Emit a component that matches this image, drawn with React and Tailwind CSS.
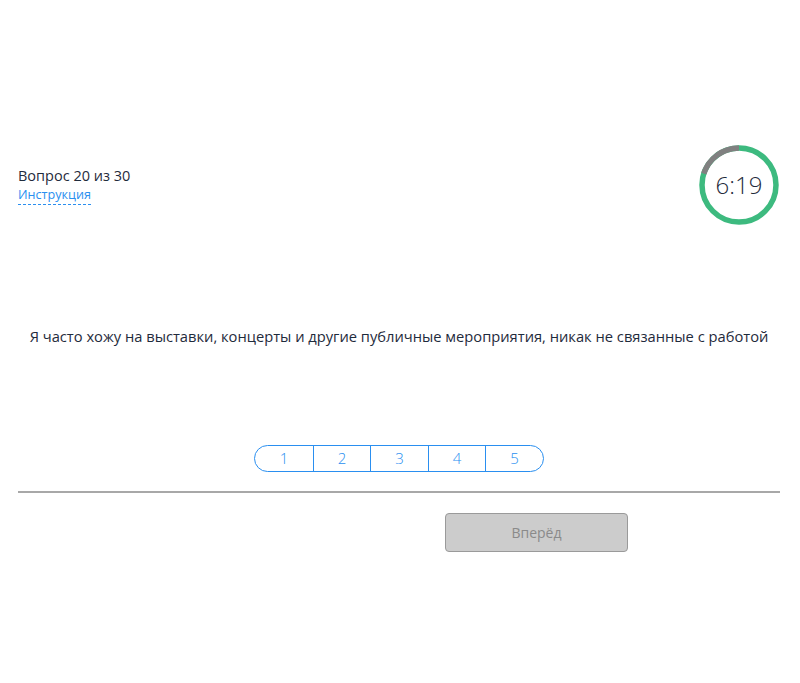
export default function App() {
  const r = 37;
  const c = 2 * Math.PI * r;
  const gray = 0.2;
  return (
    <div className="min-h-[683px] bg-white pl-[18px] pr-[20px] pt-[145px] text-[#1f2b3c]" style={{ fontFamily: '"Open Sans", sans-serif' }}>
      <div className="flex items-center justify-between">
        <div className="flex flex-col">
          <span className="text-[14.5px] leading-[20px]">Вопрос 20 из 30</span>
          <span className="self-start text-[12.6px] leading-[18px] text-[#2a8ff0] border-b border-dashed border-[#2a8ff0]">Инструкция</span>
        </div>
        <div className="relative h-[80px] w-[80px] mr-[1px]">
          <svg width="80" height="80" viewBox="0 0 80 80" className="absolute inset-0">
            <circle cx="40" cy="40" r={r} fill="none" stroke="#3dba7f" strokeWidth="5.5" />
            <circle
              cx="40"
              cy="40"
              r={r}
              fill="none"
              stroke="#808080"
              strokeWidth="5.5"
              strokeDasharray={`${c * gray} ${c}`}
              transform="rotate(-90 40 40) scale(1 -1) translate(0 -80)"
            />
          </svg>
          <div className="absolute inset-0 flex items-center justify-center text-[24px] font-light text-[#1f2b3c]">6:19</div>
        </div>
      </div>

      <p className="mt-[101px] text-center text-[14.7px] leading-[20px]">
        Я часто хожу на выставки, концерты и другие публичные мероприятия, никак не связанные с работой
      </p>

      <div className="mt-[99px] flex justify-center">
        <div className="flex h-[27px] overflow-hidden rounded-full border border-[#2a8ff0] text-[15px] font-light text-[#2a8ff0]">
          {[1, 2, 3, 4, 5].map((n, i) => (
            <button
              key={n}
              className={`flex w-[57.5px] items-center justify-center ${i > 0 ? 'border-l border-[#2a8ff0]' : ''}`}
            >
              {n}
            </button>
          ))}
        </div>
      </div>

      <div className="mt-[19px] h-[2px] bg-[#a8a8a8]" />

      <div className="mt-[20px] flex">
        <button className="ml-[427px] h-[39px] w-[183px] rounded-[4px] border border-[#9a9a9a] bg-[#cccccc] text-[14px] text-[#8a8a8a]">
          Вперёд
        </button>
      </div>
    </div>
  );
}
